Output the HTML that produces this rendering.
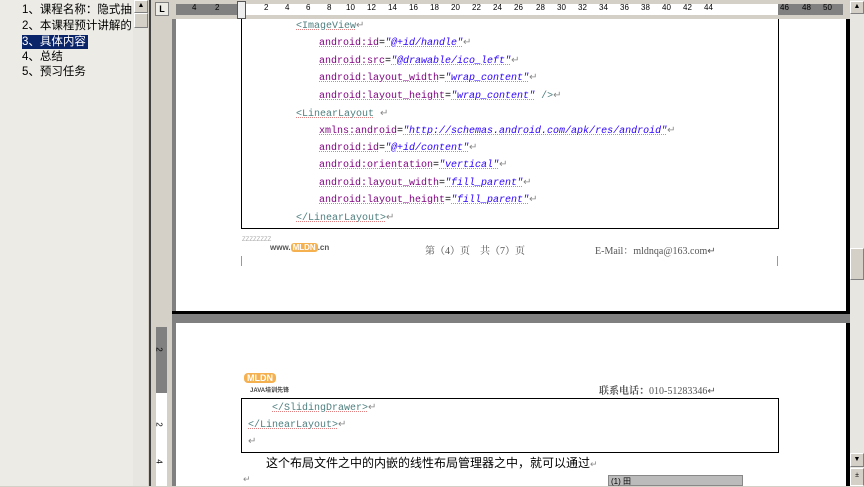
<!DOCTYPE html>
<html><head><meta charset="utf-8"><style>
*{margin:0;padding:0;box-sizing:border-box}
body{width:864px;height:486px;overflow:hidden;position:relative;background:#d4d0c8;font-family:"Liberation Sans","Noto Sans CJK SC",sans-serif}
.a{position:absolute}
.nav{left:0;top:0;width:133px;height:486px;background:#ecebe6;font-size:11.5px;color:#000;overflow:hidden}
.nav div{position:absolute;left:22px;white-space:nowrap;line-height:14px}
.code{font-family:"Liberation Mono",monospace;font-size:10px;white-space:nowrap;line-height:12px}
.t{color:#4f7f7f;text-decoration:underline dotted #e08080}
.n{color:#7f007f;text-decoration:underline dotted #e08080}
.v{color:#2a00ff;font-style:italic;text-decoration:underline dotted #e08080}
.r{color:#888;font-style:normal}
</style></head><body>
<div class="a nav">
<div style="top:3px">1、课程名称：隐式抽</div>
<div style="top:19px">2、本课程预计讲解的</div>
<div style="top:35px;background:#0a246a;color:#fff;left:22px;padding-right:2px">3、具体内容</div>
<div style="top:50px">4、总结</div>
<div style="top:65px">5、预习任务</div>
</div>
<!-- left scrollbar -->
<div class="a" style="left:133px;top:0;width:15px;height:486px;background:#e8e6e0"></div>
<div class="a" style="left:134px;top:0;width:14px;height:13px;background:#d4d0c8;border:1px solid #fff;border-right-color:#808080;border-bottom-color:#808080;font-size:7px;text-align:center;line-height:10px">▲</div>
<div class="a" style="left:134px;top:13px;width:14px;height:15px;background:#d4d0c8;border:1px solid #fff;border-right-color:#808080;border-bottom-color:#808080"></div>
<div class="a" style="left:149px;top:0;width:2px;height:486px;background:#404040"></div>
<!-- vertical ruler -->
<div class="a" style="left:151px;top:0;width:22px;height:486px;background:#d4d0c8"></div>
<div class="a" style="left:156px;top:327px;width:11px;height:66px;background:#808080"></div>
<div class="a" style="left:156px;top:393px;width:11px;height:93px;background:#fff"></div>
<div class="a" style="left:157px;top:345px;font-size:8px;transform:rotate(90deg)">2</div>
<div class="a" style="left:157px;top:420px;font-size:8px;transform:rotate(90deg)">2</div>
<div class="a" style="left:157px;top:457px;font-size:8px;transform:rotate(90deg)">4</div>
<div class="a" style="left:172px;top:18px;width:4px;height:468px;background:#808080"></div>
<!-- horizontal ruler -->
<div class="a" style="left:151px;top:0;width:699px;height:19px;background:#d4d0c8"></div>
<div class="a" style="left:155px;top:2px;width:14px;height:14px;border:1px solid #808080;background:#ecebe6;font-size:9px;font-weight:bold;text-align:center;line-height:12px">L</div>
<div class="a" style="left:176px;top:4px;width:667px;height:11px;background:#808080"></div>
<div class="a" style="left:241px;top:4px;width:537px;height:11px;background:#fff"></div>
<div class="a" style="left:176px;top:3px;width:667px;font-size:8px;font-family:'Liberation Sans';white-space:nowrap">
<span class="a" style="left:16px">4</span><span class="a" style="left:39px">2</span><span class="a" style="left:88px">2</span><span class="a" style="left:109px">4</span><span class="a" style="left:130px">6</span><span class="a" style="left:151px">8</span><span class="a" style="left:170px">10</span><span class="a" style="left:191px">12</span><span class="a" style="left:212px">14</span><span class="a" style="left:233px">16</span><span class="a" style="left:254px">18</span><span class="a" style="left:275px">20</span><span class="a" style="left:296px">22</span><span class="a" style="left:317px">24</span><span class="a" style="left:338px">26</span><span class="a" style="left:360px">28</span><span class="a" style="left:381px">30</span><span class="a" style="left:402px">32</span><span class="a" style="left:423px">34</span><span class="a" style="left:444px">36</span><span class="a" style="left:465px">38</span><span class="a" style="left:486px">40</span><span class="a" style="left:507px">42</span><span class="a" style="left:528px">44</span><span class="a" style="left:604px">46</span><span class="a" style="left:626px">48</span><span class="a" style="left:647px">50</span></div>
<div class="a" style="left:237px;top:1px;width:9px;height:18px;border:1px solid #555;background:#eee"></div>
<!-- page 1 -->
<div class="a" style="left:176px;top:19px;width:670px;height:293px;background:#fff"></div>
<div class="a" style="left:846px;top:19px;width:4px;height:467px;background:#000"></div>
<div class="a" style="left:241px;top:19px;width:538px;height:210px;border:1px solid #000;border-top:none"></div>
<div class="a code" style="left:296px;top:21px"><span class="t">&lt;ImageView</span><span class="r">↵</span></div>
<div class="a code" style="left:319px;top:38px"><span class="n">android:id</span>=<span class="v">"@+id/handle"</span><span class="r">↵</span></div>
<div class="a code" style="left:319px;top:56px"><span class="n">android:src</span>=<span class="v">"@drawable/ico_left"</span><span class="r">↵</span></div>
<div class="a code" style="left:319px;top:73px"><span class="n">android:layout_width</span>=<span class="v">"wrap_content"</span><span class="r">↵</span></div>
<div class="a code" style="left:319px;top:91px"><span class="n">android:layout_height</span>=<span class="v">"wrap_content"</span> <span style="color:#4f7f7f">/&gt;</span><span class="r">↵</span></div>
<div class="a code" style="left:296px;top:109px"><span class="t">&lt;LinearLayout</span> <span class="r">↵</span></div>
<div class="a code" style="left:319px;top:126px"><span class="n">xmlns:android</span>=<span class="v">"http://schemas.android.com/apk/res/android"</span><span class="r">↵</span></div>
<div class="a code" style="left:319px;top:143px"><span class="n">android:id</span>=<span class="v">"@+id/content"</span><span class="r">↵</span></div>
<div class="a code" style="left:319px;top:160px"><span class="n">android:orientation</span>=<span class="v">"vertical"</span><span class="r">↵</span></div>
<div class="a code" style="left:319px;top:178px"><span class="n">android:layout_width</span>=<span class="v">"fill_parent"</span><span class="r">↵</span></div>
<div class="a code" style="left:319px;top:195px"><span class="n">android:layout_height</span>=<span class="v">"fill_parent"</span><span class="r">↵</span></div>
<div class="a code" style="left:296px;top:213px"><span class="t">&lt;/LinearLayout&gt;</span><span class="r">↵</span></div>
<div class="a" style="left:242px;top:237px;font-size:6px;color:#aaa">ZZZZZZZZ</div>
<div class="a" style="left:270px;top:243px;font-size:8px;color:#555;font-weight:bold">www.<span style="background:#f5b050;color:#fff;padding:0 2px;border-radius:3px">MLDN</span>.cn</div>
<div class="a" style="left:425px;top:242px;font-size:10px;color:#555;font-family:'Liberation Serif','Noto Serif CJK SC',serif">第（4）页　共（7）页</div>
<div class="a" style="left:595px;top:242px;font-size:10px;color:#555;font-family:'Liberation Serif','Noto Serif CJK SC',serif">E-Mail：mldnqa@163.com↵</div>
<div class="a" style="left:241px;top:256px;width:1px;height:10px;background:#999"></div>
<div class="a" style="left:777px;top:256px;width:1px;height:10px;background:#999"></div>
<!-- gap -->
<div class="a" style="left:172px;top:311px;width:678px;height:3px;background:#000"></div>
<div class="a" style="left:172px;top:314px;width:678px;height:9px;background:#808080"></div>
<!-- page 2 -->
<div class="a" style="left:176px;top:323px;width:670px;height:163px;background:#fff"></div>
<div class="a" style="left:244px;top:373px;font-size:9px;color:#fff;font-weight:bold;background:#f5b050;padding:0 3px;border-radius:4px">MLDN</div>
<div class="a" style="left:250px;top:385px;font-size:6px;color:#444;font-weight:bold">JAVA培训先锋</div>
<div class="a" style="left:599px;top:382px;font-size:10px;color:#555;font-family:'Liberation Serif','Noto Serif CJK SC',serif"><b>联系电话：</b>010-51283346↵</div>
<div class="a" style="left:241px;top:398px;width:538px;height:55px;border:1px solid #000"></div>
<div class="a code" style="left:272px;top:403px"><span class="t">&lt;/SlidingDrawer&gt;</span><span class="r">↵</span></div>
<div class="a code" style="left:248px;top:420px"><span class="t">&lt;/LinearLayout&gt;</span><span class="r">↵</span></div>
<div class="a code" style="left:248px;top:437px"><span class="r">↵</span></div>
<div class="a" style="left:266px;top:454px;font-size:12px;color:#000;white-space:nowrap">这个布局文件之中的内嵌的线性布局管理器之中，就可以通过<span style="color:#888;font-size:9px">↵</span></div>
<div class="a" style="left:243px;top:474px;font-size:9px;color:#888">↵</div>
<div class="a" style="left:608px;top:475px;width:135px;height:11px;background:#bbb;border:1px solid #888"></div>
<div class="a" style="left:611px;top:476px;font-size:8px">(1) 田</div>
<!-- right scrollbar -->
<div class="a" style="left:850px;top:0;width:14px;height:486px;background:#e8e6e0"></div>
<div class="a" style="left:850px;top:1px;width:14px;height:13px;background:#d4d0c8;border:1px solid #fff;border-right-color:#808080;border-bottom-color:#808080;font-size:7px;text-align:center;line-height:10px">▲</div>
<div class="a" style="left:850px;top:248px;width:14px;height:32px;background:#d4d0c8;border:1px solid #fff;border-right-color:#808080;border-bottom-color:#808080"></div>
<div class="a" style="left:850px;top:453px;width:14px;height:14px;background:#d4d0c8;border:1px solid #fff;border-right-color:#808080;border-bottom-color:#808080;font-size:7px;text-align:center;line-height:11px">▼</div>
<div class="a" style="left:850px;top:468px;width:14px;height:18px;background:#d4d0c8;border:1px solid #fff;border-right-color:#808080;font-size:7px;text-align:center;line-height:14px">±</div>
</body></html>
